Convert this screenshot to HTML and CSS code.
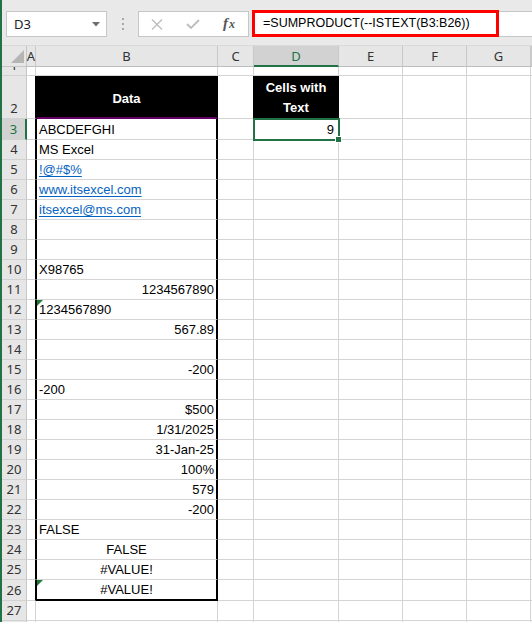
FILE: index.html
```html
<!DOCTYPE html>
<html>
<head>
<meta charset="utf-8">
<link rel="stylesheet" href="styles.css">
</head>
<body>
<div class="app">
  <div class="toolbar">
    <div class="namebox"><span class="nbtext">D3</span>
      <svg class="dd" width="8" height="5" viewBox="0 0 8 5"><path d="M0 0H8L4 4.5Z" fill="#6e6e6e"/></svg>
    </div>
    <div class="sep"><i></i><i></i><i></i></div>
    <div class="fbtns">
      <span class="fb"><svg width="12" height="11" viewBox="0 0 12 11"><path d="M1 0.5L11 10.5M11 0.5L1 10.5" stroke="#bdbdbd" stroke-width="1.4" fill="none"/></svg></span>
      <span class="fb"><svg width="14" height="10" viewBox="0 0 14 10"><path d="M1 5L5 9L13 1" stroke="#bdbdbd" stroke-width="1.8" fill="none"/></svg></span>
      <span class="fb fx"><span class="fxf">f</span><span class="fxx">x</span></span>
    </div>
    <div class="formula"><div class="redbox">=SUMPRODUCT(--ISTEXT(B3:B26))</div></div>
  </div>
  <div class="sheet">
    <div class="corner"><svg width="13" height="13" viewBox="0 0 13 13"><path d="M13 0V13H0Z" fill="#b5b5b5"/></svg></div>
    <div class="ch">A</div><div class="ch">B</div><div class="ch">C</div><div class="ch chsel">D</div><div class="ch">E</div><div class="ch">F</div><div class="ch">G</div><div class="ch"></div>

    <div class="rh">1</div><div class="c"></div><div class="c"></div><div class="c"></div><div class="c"></div><div class="c"></div><div class="c"></div><div class="c"></div><div class="c"></div>

    <div class="rh">2</div><div class="c a"></div><div class="c b hdr bhdr">Data</div><div class="c cblk"></div><div class="c hdr dhdr">Cells with<br>Text</div><div class="c"></div><div class="c"></div><div class="c"></div><div class="c"></div>

    <div class="rh rhsel">3</div><div class="c a"></div><div class="c b">ABCDEFGHI</div><div class="c"></div><div class="c r sel">9<span class="fill"></span></div><div class="c"></div><div class="c"></div><div class="c"></div><div class="c"></div>

    <div class="rh">4</div><div class="c a"></div><div class="c b">MS Excel</div><div class="c"></div><div class="c"></div><div class="c"></div><div class="c"></div><div class="c"></div><div class="c"></div>

    <div class="rh">5</div><div class="c a"></div><div class="c b"><span class="lnk">!@#$%</span></div><div class="c"></div><div class="c"></div><div class="c"></div><div class="c"></div><div class="c"></div><div class="c"></div>

    <div class="rh">6</div><div class="c a"></div><div class="c b"><span class="lnk">www.itsexcel.com</span></div><div class="c"></div><div class="c"></div><div class="c"></div><div class="c"></div><div class="c"></div><div class="c"></div>

    <div class="rh">7</div><div class="c a"></div><div class="c b"><span class="lnk">itsexcel@ms.com</span></div><div class="c"></div><div class="c"></div><div class="c"></div><div class="c"></div><div class="c"></div><div class="c"></div>

    <div class="rh">8</div><div class="c a"></div><div class="c b"></div><div class="c"></div><div class="c"></div><div class="c"></div><div class="c"></div><div class="c"></div><div class="c"></div>

    <div class="rh">9</div><div class="c a"></div><div class="c b"></div><div class="c"></div><div class="c"></div><div class="c"></div><div class="c"></div><div class="c"></div><div class="c"></div>

    <div class="rh">10</div><div class="c a"></div><div class="c b">X98765</div><div class="c"></div><div class="c"></div><div class="c"></div><div class="c"></div><div class="c"></div><div class="c"></div>

    <div class="rh">11</div><div class="c a"></div><div class="c b r">1234567890</div><div class="c"></div><div class="c"></div><div class="c"></div><div class="c"></div><div class="c"></div><div class="c"></div>

    <div class="rh">12</div><div class="c a"></div><div class="c b tri">1234567890</div><div class="c"></div><div class="c"></div><div class="c"></div><div class="c"></div><div class="c"></div><div class="c"></div>

    <div class="rh">13</div><div class="c a"></div><div class="c b r">567.89</div><div class="c"></div><div class="c"></div><div class="c"></div><div class="c"></div><div class="c"></div><div class="c"></div>

    <div class="rh">14</div><div class="c a"></div><div class="c b"></div><div class="c"></div><div class="c"></div><div class="c"></div><div class="c"></div><div class="c"></div><div class="c"></div>

    <div class="rh">15</div><div class="c a"></div><div class="c b r">-200</div><div class="c"></div><div class="c"></div><div class="c"></div><div class="c"></div><div class="c"></div><div class="c"></div>

    <div class="rh">16</div><div class="c a"></div><div class="c b">-200</div><div class="c"></div><div class="c"></div><div class="c"></div><div class="c"></div><div class="c"></div><div class="c"></div>

    <div class="rh">17</div><div class="c a"></div><div class="c b r">$500</div><div class="c"></div><div class="c"></div><div class="c"></div><div class="c"></div><div class="c"></div><div class="c"></div>

    <div class="rh">18</div><div class="c a"></div><div class="c b r">1/31/2025</div><div class="c"></div><div class="c"></div><div class="c"></div><div class="c"></div><div class="c"></div><div class="c"></div>

    <div class="rh">19</div><div class="c a"></div><div class="c b r">31-Jan-25</div><div class="c"></div><div class="c"></div><div class="c"></div><div class="c"></div><div class="c"></div><div class="c"></div>

    <div class="rh">20</div><div class="c a"></div><div class="c b r">100%</div><div class="c"></div><div class="c"></div><div class="c"></div><div class="c"></div><div class="c"></div><div class="c"></div>

    <div class="rh">21</div><div class="c a"></div><div class="c b r">579</div><div class="c"></div><div class="c"></div><div class="c"></div><div class="c"></div><div class="c"></div><div class="c"></div>

    <div class="rh">22</div><div class="c a"></div><div class="c b r">-200</div><div class="c"></div><div class="c"></div><div class="c"></div><div class="c"></div><div class="c"></div><div class="c"></div>

    <div class="rh">23</div><div class="c a"></div><div class="c b">FALSE</div><div class="c"></div><div class="c"></div><div class="c"></div><div class="c"></div><div class="c"></div><div class="c"></div>

    <div class="rh">24</div><div class="c a"></div><div class="c b m">FALSE</div><div class="c"></div><div class="c"></div><div class="c"></div><div class="c"></div><div class="c"></div><div class="c"></div>

    <div class="rh">25</div><div class="c a"></div><div class="c b m">#VALUE!</div><div class="c"></div><div class="c"></div><div class="c"></div><div class="c"></div><div class="c"></div><div class="c"></div>

    <div class="rh">26</div><div class="c a"></div><div class="c b m tri blast">#VALUE!</div><div class="c"></div><div class="c"></div><div class="c"></div><div class="c"></div><div class="c"></div><div class="c"></div>

    <div class="rh">27</div><div class="c"></div><div class="c"></div><div class="c"></div><div class="c"></div><div class="c"></div><div class="c"></div><div class="c"></div><div class="c"></div>

    <div class="rh"></div><div class="c"></div><div class="c"></div><div class="c"></div><div class="c"></div><div class="c"></div><div class="c"></div><div class="c"></div><div class="c"></div>
  </div>
</div>
</body>
</html>
```

FILE: styles.css
```css
* { box-sizing: border-box; margin: 0; padding: 0; }
html, body { width: 532px; height: 622px; overflow: hidden; background: #fff; }
body { margin: 0; }

.app {
  width: 532px;
  height: 622px;
  overflow: hidden;
  border-left: 2px solid #217346;
  font-family: "Liberation Sans", Arial, sans-serif;
}

/* ---------- formula toolbar ---------- */
.toolbar {
  height: 46px;
  background: #e9e9e9;
  border-bottom: 1px solid #d9d9d9;
  display: flex;
  align-items: flex-start;
  padding: 11px 0 0 4px;
}
.namebox {
  width: 101px;
  height: 26px;
  background: #fff;
  border: 1px solid #c6c6c6;
  display: flex;
  align-items: center;
  padding-left: 7px;
  font-family: "Noto Sans", sans-serif;
  font-size: 13px;
  color: #222;
}
.nbtext { line-height: 24px; }
.dd { margin-left: auto; margin-right: 6px; }
.sep {
  width: 31px;
  height: 26px;
  display: flex;
  flex-direction: column;
  align-items: center;
  justify-content: center;
  gap: 3px;
}
.sep i { display: block; width: 2px; height: 2px; background: #a8a8a8; }
.fbtns {
  width: 111px;
  height: 26px;
  background: #fff;
  border: 1px solid #c6c6c6;
  display: flex;
  align-items: center;
}
.fb {
  width: 36px;
  height: 24px;
  display: flex;
  align-items: center;
  justify-content: center;
}
.fx {
  font-family: "Liberation Serif", serif;
  font-style: italic;
  color: #555;
  align-items: baseline;
  padding-top: 3px;
}
.fxf { font-size: 15px; font-weight: bold; }
.fxx { font-size: 12px; font-weight: bold; margin-left: 1px; }
.formula {
  flex: 1;
  height: 26px;
  margin-left: 3px;
  background: #fff;
  border-top: 1px solid #c6c6c6;
  border-bottom: 1px solid #c6c6c6;
  display: flex;
}
.redbox {
  width: 247px;
  height: 27px;
  margin-top: -2px;
  border: 3px solid #ff0000;
  padding-left: 8px;
  font-size: 12.5px;
  line-height: 21px;
  color: #000;
  white-space: nowrap;
}

/* ---------- sheet grid ---------- */
.sheet {
  display: grid;
  grid-template-columns: 25px 9px 182px 36px 85px 64px 64px 64px 1px;
  grid-template-rows: 21px 9px 43px 21px repeat(22, 20px) 21px 20px 20px;
  font-size: 13px;
  color: #000;
}
.corner {
  background: #e6e6e6;
  border-right: 1px solid #c6c6c6;
  border-bottom: 1px solid #c6c6c6;
  display: flex;
  align-items: flex-end;
  justify-content: flex-end;
  padding: 0 2px 3px 0;
}
.ch {
  background: #e6e6e6;
  border-right: 1px solid #c9c9c9;
  border-bottom: 1px solid #bdbdbd;
  display: flex;
  justify-content: center;
  align-items: flex-end;
  font-family: "Noto Sans", sans-serif;
  font-size: 13px;
  line-height: 18px;
  color: #333;
  padding-bottom: 1px;
}
.chsel {
  background: #d2d2d2;
  color: #217346;
  border-bottom: 2px solid #217346;
  padding-bottom: 0;
}
.rh {
  background: #e6e6e6;
  border-right: 1px solid #c6c6c6;
  border-bottom: 1px solid #d2d2d2;
  display: flex;
  justify-content: center;
  align-items: flex-end;
  overflow: hidden;
  font-family: "Noto Sans", sans-serif;
  font-size: 13px;
  line-height: 18px;
  color: #333;
  padding-bottom: 1px;
}
.rhsel {
  background: #d2d2d2;
  color: #217346;
  border-right: 2px solid #217346;
}
.c {
  border-right: 1px solid #d4d4d4;
  border-bottom: 1px solid #d4d4d4;
  display: flex;
  align-items: flex-end;
  padding: 0 2px 1px 2px;
  white-space: nowrap;
  line-height: 17px;
}
.a { border-right-color: #000; }
.b {
  border-left: 1px solid #000;
  border-right: 2px solid #000;
  position: relative;
}
.r { justify-content: flex-end; }
.m { justify-content: center; }
.blast { border-bottom: 2px solid #000; }
.lnk { color: #0563c1; text-decoration: underline; text-underline-offset: 2px; }

.hdr {
  background: #000;
  color: #fff;
  font-weight: bold;
  justify-content: center;
  text-align: center;
}
.bhdr {
  align-items: center;
  padding-top: 4px;
  border-bottom: 2px solid #660066;
}
.dhdr {
  align-items: center;
  line-height: 20px;
  border-right-color: #000;
  padding-top: 3px;
}
.cblk { border-right-color: #000; }

.sel { position: relative; padding-right: 4px; }
.sel::after {
  content: "";
  position: absolute;
  left: -1px;
  top: -1px;
  right: -2px;
  bottom: -2px;
  border: 2px solid #217346;
}
.fill {
  position: absolute;
  right: -4px;
  bottom: -4px;
  width: 7px;
  height: 7px;
  background: #217346;
  border: 1px solid #fff;
  z-index: 2;
}
.tri::before {
  content: "";
  position: absolute;
  left: 0;
  top: 0;
  border-top: 6px solid #1e7b3a;
  border-right: 6px solid transparent;
}
```
